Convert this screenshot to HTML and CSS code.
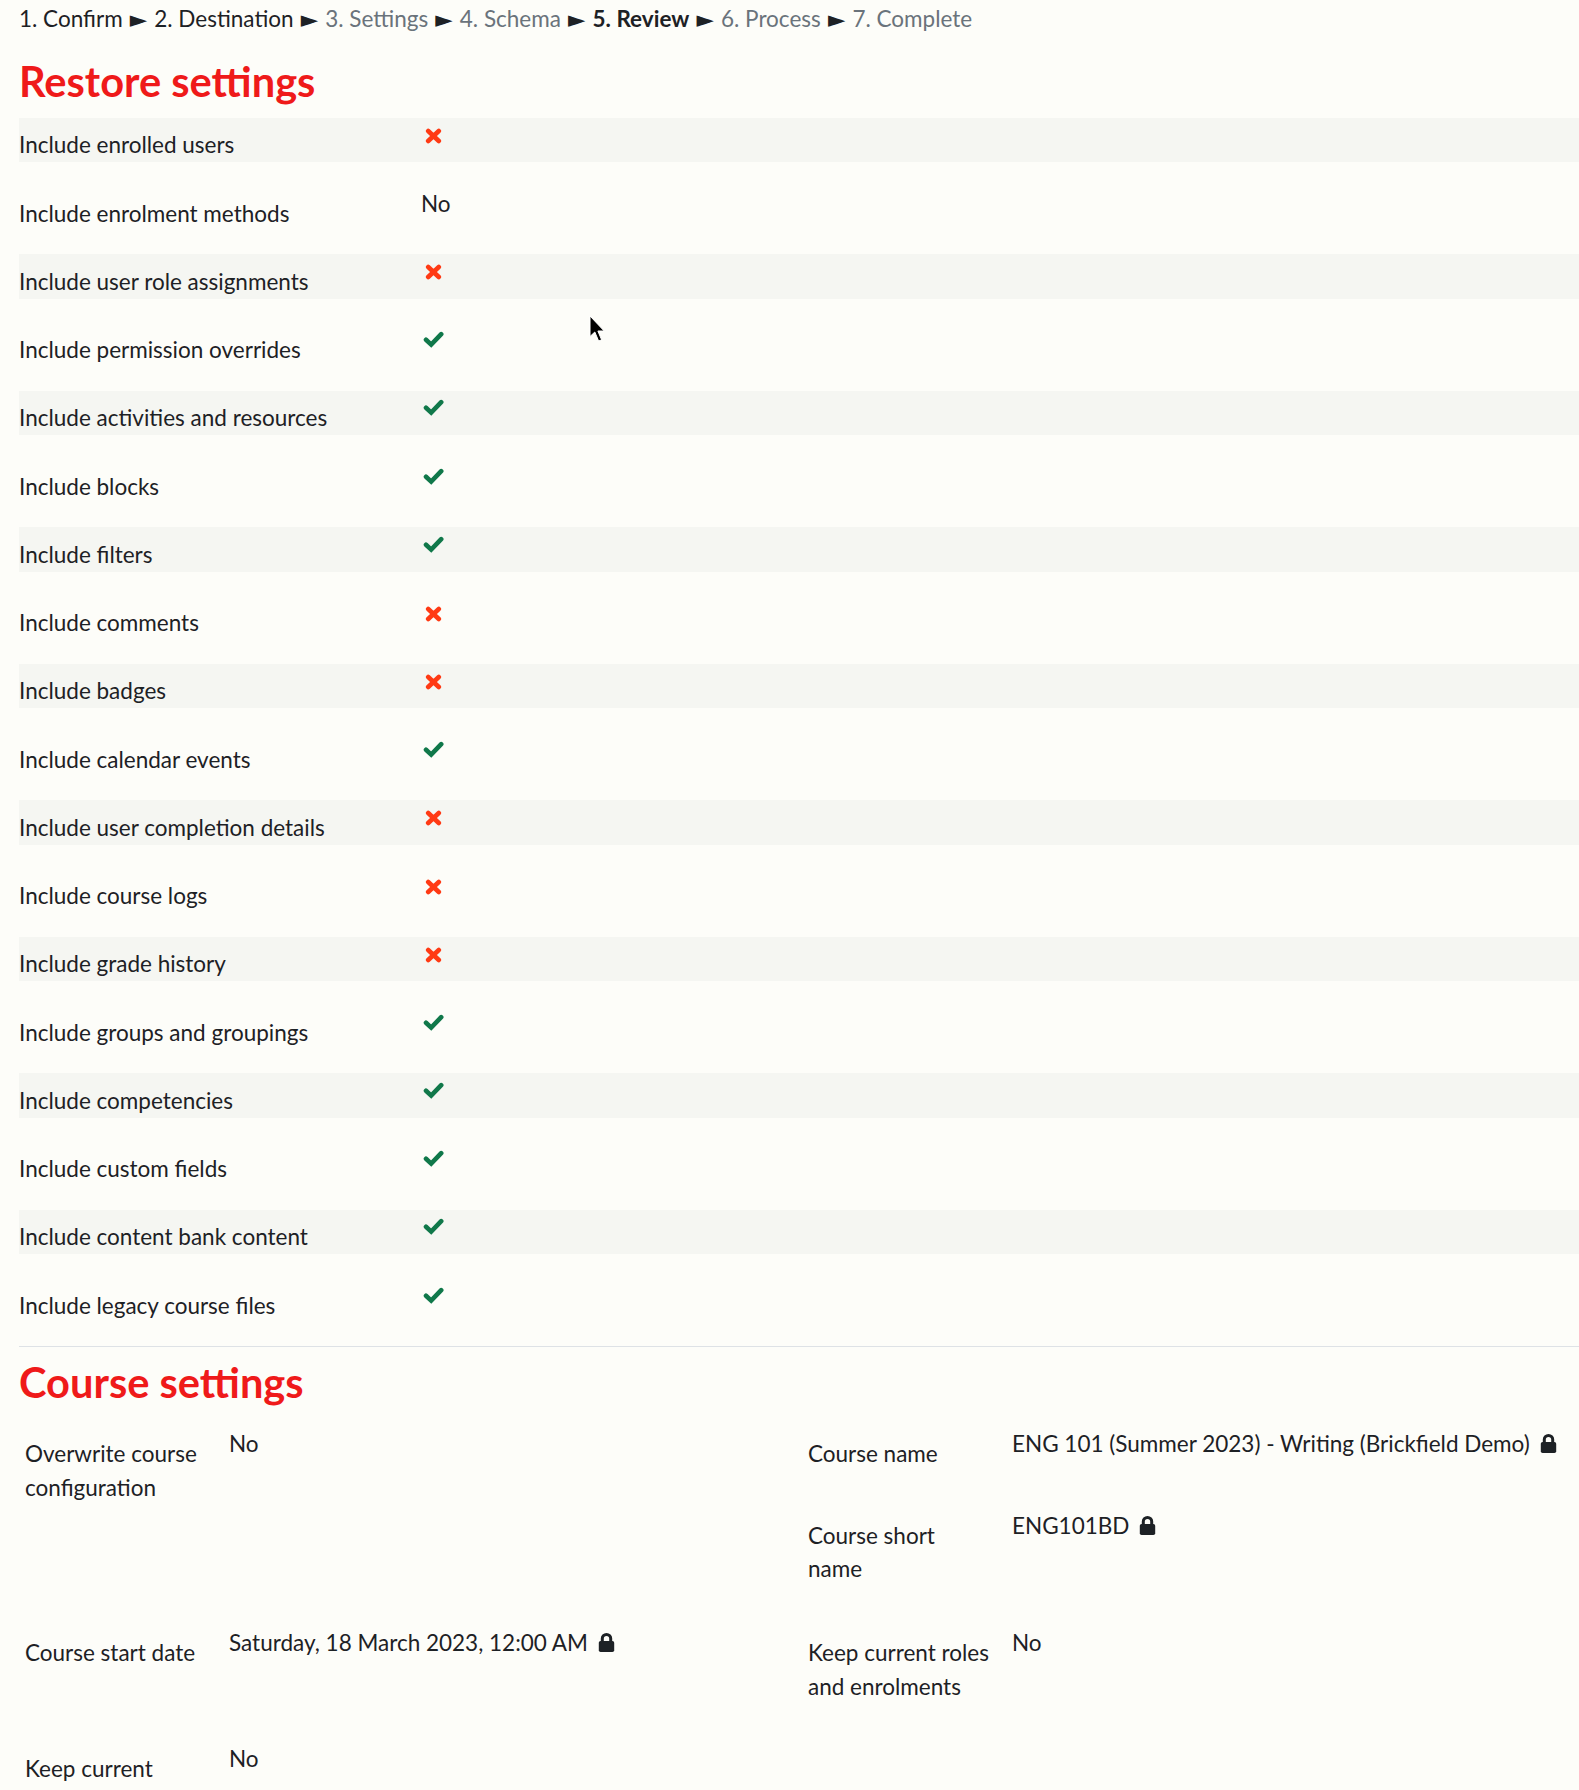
FILE: index.html
```html
<!DOCTYPE html>
<html lang="en">
<head>
<meta charset="utf-8">
<title>Restore - Review</title>
<link rel="stylesheet" href="styles.css">
</head>
<body>
<div class="page">
  <div class="progress">
    <span class="stage done">1. Confirm</span><span class="sep"> ► </span><span class="stage done">2. Destination</span><span class="sep"> ► </span><span class="stage">3. Settings</span><span class="sep"> ► </span><span class="stage">4. Schema</span><span class="sep"> ► </span><span class="stage current">5. Review</span><span class="sep"> ► </span><span class="stage">6. Process</span><span class="sep"> ► </span><span class="stage">7. Complete</span>
  </div>

  <h2 class="section-title first">Restore settings</h2>

  <div class="settings">
    <div class="fitem"><div class="flabel">Include enrolled users</div><div class="fvalue"><svg class="ico-no" viewBox="0 0 17 16"><path d="M3.2 3L13.8 13M13.8 3L3.2 13"/></svg></div></div>
    <div class="fitem"><div class="flabel">Include enrolment methods</div><div class="fvalue">No</div></div>
    <div class="fitem"><div class="flabel">Include user role assignments</div><div class="fvalue"><svg class="ico-no" viewBox="0 0 17 16"><path d="M3.2 3L13.8 13M13.8 3L3.2 13"/></svg></div></div>
    <div class="fitem"><div class="flabel">Include permission overrides</div><div class="fvalue"><svg class="ico-yes" viewBox="0 0 21 17"><path d="M3 8.8L8.2 13.6L18.2 3.2"/></svg></div></div>
    <div class="fitem"><div class="flabel">Include activities and resources</div><div class="fvalue"><svg class="ico-yes" viewBox="0 0 21 17"><path d="M3 8.8L8.2 13.6L18.2 3.2"/></svg></div></div>
    <div class="fitem"><div class="flabel">Include blocks</div><div class="fvalue"><svg class="ico-yes" viewBox="0 0 21 17"><path d="M3 8.8L8.2 13.6L18.2 3.2"/></svg></div></div>
    <div class="fitem"><div class="flabel">Include filters</div><div class="fvalue"><svg class="ico-yes" viewBox="0 0 21 17"><path d="M3 8.8L8.2 13.6L18.2 3.2"/></svg></div></div>
    <div class="fitem"><div class="flabel">Include comments</div><div class="fvalue"><svg class="ico-no" viewBox="0 0 17 16"><path d="M3.2 3L13.8 13M13.8 3L3.2 13"/></svg></div></div>
    <div class="fitem"><div class="flabel">Include badges</div><div class="fvalue"><svg class="ico-no" viewBox="0 0 17 16"><path d="M3.2 3L13.8 13M13.8 3L3.2 13"/></svg></div></div>
    <div class="fitem"><div class="flabel">Include calendar events</div><div class="fvalue"><svg class="ico-yes" viewBox="0 0 21 17"><path d="M3 8.8L8.2 13.6L18.2 3.2"/></svg></div></div>
    <div class="fitem"><div class="flabel">Include user completion details</div><div class="fvalue"><svg class="ico-no" viewBox="0 0 17 16"><path d="M3.2 3L13.8 13M13.8 3L3.2 13"/></svg></div></div>
    <div class="fitem"><div class="flabel">Include course logs</div><div class="fvalue"><svg class="ico-no" viewBox="0 0 17 16"><path d="M3.2 3L13.8 13M13.8 3L3.2 13"/></svg></div></div>
    <div class="fitem"><div class="flabel">Include grade history</div><div class="fvalue"><svg class="ico-no" viewBox="0 0 17 16"><path d="M3.2 3L13.8 13M13.8 3L3.2 13"/></svg></div></div>
    <div class="fitem"><div class="flabel">Include groups and groupings</div><div class="fvalue"><svg class="ico-yes" viewBox="0 0 21 17"><path d="M3 8.8L8.2 13.6L18.2 3.2"/></svg></div></div>
    <div class="fitem"><div class="flabel">Include competencies</div><div class="fvalue"><svg class="ico-yes" viewBox="0 0 21 17"><path d="M3 8.8L8.2 13.6L18.2 3.2"/></svg></div></div>
    <div class="fitem"><div class="flabel">Include custom fields</div><div class="fvalue"><svg class="ico-yes" viewBox="0 0 21 17"><path d="M3 8.8L8.2 13.6L18.2 3.2"/></svg></div></div>
    <div class="fitem"><div class="flabel">Include content bank content</div><div class="fvalue"><svg class="ico-yes" viewBox="0 0 21 17"><path d="M3 8.8L8.2 13.6L18.2 3.2"/></svg></div></div>
    <div class="fitem"><div class="flabel">Include legacy course files</div><div class="fvalue"><svg class="ico-yes" viewBox="0 0 21 17"><path d="M3 8.8L8.2 13.6L18.2 3.2"/></svg></div></div>
  </div>

  <hr class="divider">

  <h2 class="section-title second">Course settings</h2>

  <div class="course-grid">
    <div class="citem"><div class="clabel">Overwrite course<br>configuration</div><div class="cvalue">No</div></div>
    <div class="citem"><div class="clabel">Course name</div><div class="cvalue">ENG 101 (Summer 2023) - Writing (Brickfield Demo)<svg class="ico-lock" viewBox="0 0 17 20"><path class="shackle" d="M4.3 10V6.6a4.2 4.2 0 0 1 8.4 0V10"/><rect x="0.8" y="9" width="15.4" height="11" rx="1.8"/></svg></div></div>
    <div class="citem empty"></div>
    <div class="citem"><div class="clabel">Course short<br>name</div><div class="cvalue">ENG101BD<svg class="ico-lock" viewBox="0 0 17 20"><path class="shackle" d="M4.3 10V6.6a4.2 4.2 0 0 1 8.4 0V10"/><rect x="0.8" y="9" width="15.4" height="11" rx="1.8"/></svg></div></div>
    <div class="citem"><div class="clabel">Course start date</div><div class="cvalue">Saturday, 18 March 2023, 12:00 AM<svg class="ico-lock" viewBox="0 0 17 20"><path class="shackle" d="M4.3 10V6.6a4.2 4.2 0 0 1 8.4 0V10"/><rect x="0.8" y="9" width="15.4" height="11" rx="1.8"/></svg></div></div>
    <div class="citem"><div class="clabel">Keep current roles<br>and enrolments</div><div class="cvalue">No</div></div>
    <div class="citem"><div class="clabel">Keep current</div><div class="cvalue">No</div></div>
  </div>
</div>

<svg class="cursor" viewBox="0 0 16 27"><path d="M1 1V21.5L5.8 17L9.6 26L12.6 24.8L8.9 16H15.2Z"/></svg>
</body>
</html>
```
FILE: styles.css
```css
html {
  overflow: hidden;
}

body {
  margin: 0;
  background: #fdfdf9;
  color: #1d2125;
  font-family: Lato, "Noto Sans", sans-serif;
  font-size: 22.5px;
  line-height: 33.75px;
}

.page {
  padding-top: 1px;
  padding-left: 19px;
}

/* progress trail */
.progress {
  height: 33.75px;
  white-space: nowrap;
  padding-top: 1px;
}

.stage {
  color: #6a737b;
}

.stage.done {
  color: #1d2125;
}

.stage.current {
  color: #1d2125;
  font-weight: 700;
}

.sep {
  font-family: "DejaVu Sans", sans-serif;
  font-size: 22.5px;
  color: #1d2125;
}

/* headings */
.section-title {
  font-size: 41.6px;
  font-weight: 700;
  line-height: 49.2px;
  color: #ef1a1a;
  margin: 0;
}

.section-title.first {
  margin-top: 21.7px;
  margin-bottom: 11.3px;
}

.section-title.second {
  margin-top: 11px;
  margin-bottom: 18.3px;
}

/* restore settings rows */
.fitem {
  display: grid;
  grid-template-columns: 402px 1fr;
  height: 44.25px;
  margin-bottom: 24px;
}

.fitem:nth-child(odd) {
  background: #f5f6f2;
}

.flabel {
  padding-top: 10.5px;
  white-space: nowrap;
}

.fvalue {
  min-width: 0;
  padding-top: 1px;
}

.ico-no {
  display: block;
  width: 17px;
  height: 16px;
  margin: 9px 0 0 4px;
  fill: none;
  stroke: #ff3a14;
  stroke-width: 4.6;
  stroke-linecap: round;
}

.ico-yes {
  display: block;
  width: 21px;
  height: 17px;
  margin: 7.5px 0 0 2px;
  fill: none;
  stroke: #10784a;
  stroke-width: 4.6;
  stroke-linecap: round;
  stroke-linejoin: miter;
}

.divider {
  margin: 0;
  border: 0;
  border-top: 1px solid #dee2e6;
  height: 0;
}

/* course settings */
.course-grid {
  display: grid;
  grid-template-columns: 783px 1fr;
  grid-template-rows: 81.7px 117.7px 115.6px auto;
  padding-left: 6px;
}

.citem {
  display: grid;
  grid-template-columns: 204px 1fr;
  align-items: start;
}

.clabel {
  padding-top: 11px;
  white-space: nowrap;
}

.cvalue {
  white-space: nowrap;
  padding-top: 1px;
}

.ico-lock {
  display: inline-block;
  width: 17px;
  height: 20px;
  margin-left: 10px;
  vertical-align: -1px;
  fill: #1d2125;
}

.ico-lock .shackle {
  fill: none;
  stroke: #1d2125;
  stroke-width: 3;
}

/* mouse pointer captured in the screenshot */
.cursor {
  position: absolute;
  left: 589px;
  top: 315px;
  width: 16px;
  height: 27px;
  fill: #000;
  stroke: #fff;
  stroke-width: 1;
}
```
